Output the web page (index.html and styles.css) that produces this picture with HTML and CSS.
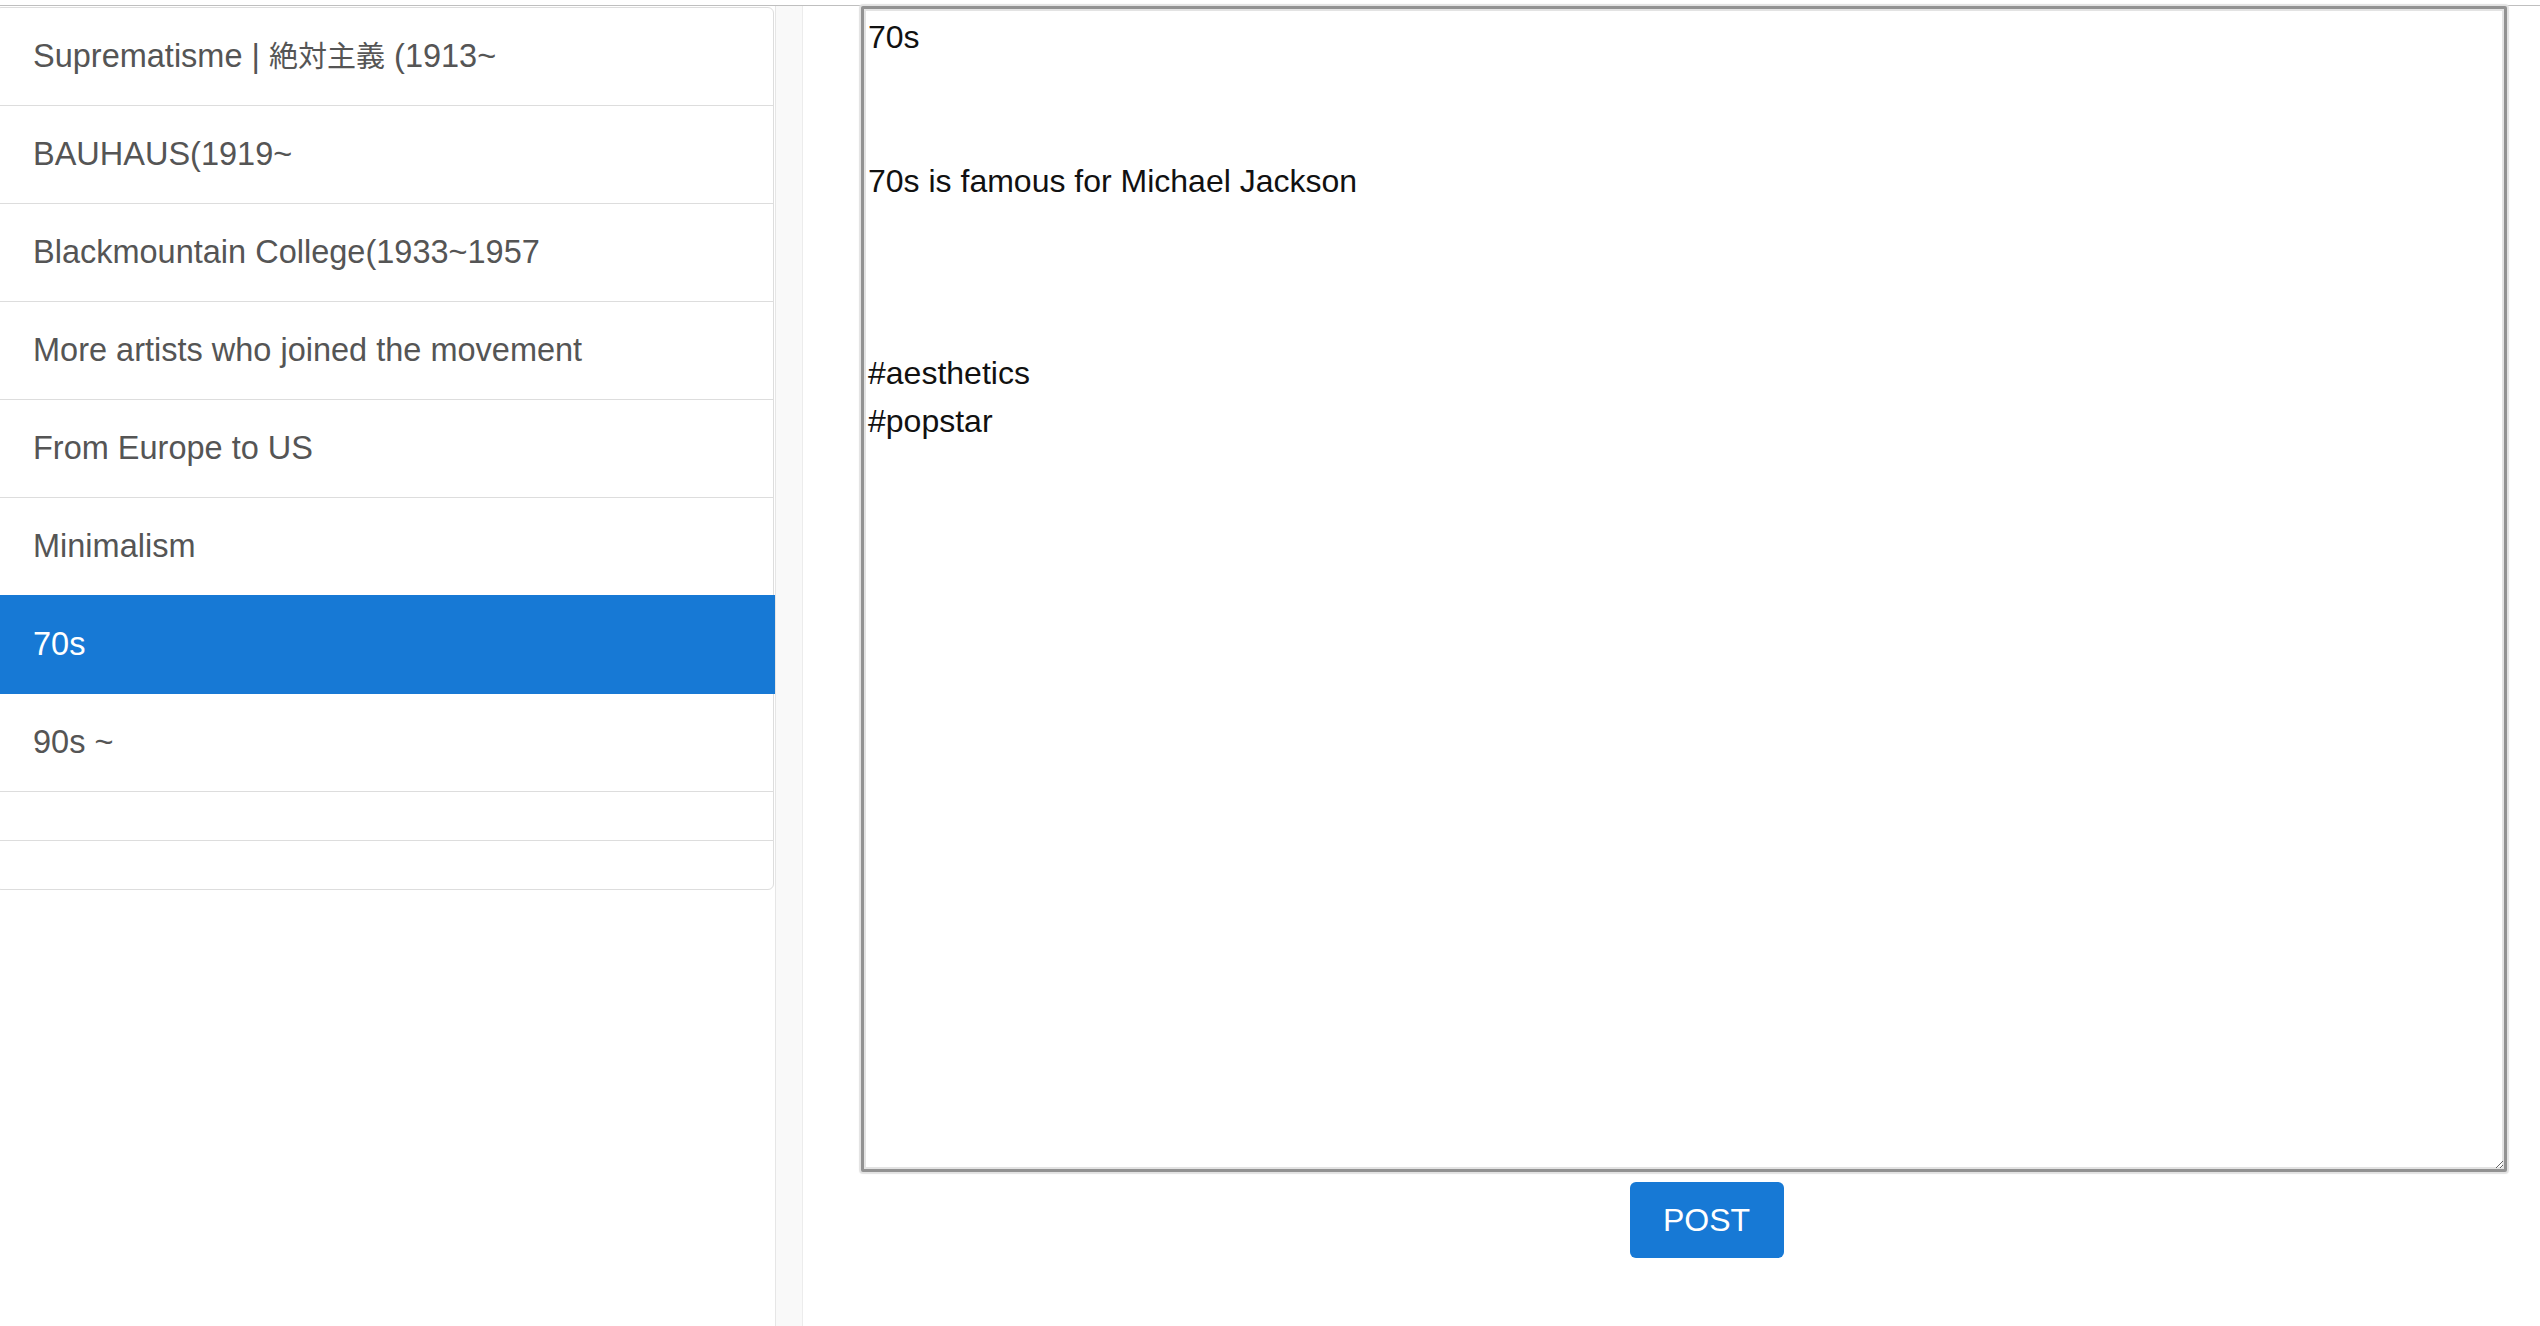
FILE: index.html
```html
<!DOCTYPE html>
<html lang="en">
<head>
    <meta charset="UTF-8">
    <meta name="viewport" content="width=device-width, initial-scale=1.0">
    <title>Movements</title>
    <link rel="stylesheet" href="styles.css">
</head>
<body>
    <div class="topbar"></div>

    <div class="layout">
        <!-- Sidebar list of movements -->
        <aside class="sidebar">
            <div class="list-group">
                <a class="list-item">Suprematisme | <span class="cjk">絶対主義</span> (1913~</a>
                <a class="list-item">BAUHAUS(1919~</a>
                <a class="list-item">Blackmountain College(1933~1957</a>
                <a class="list-item">More artists who joined the movement</a>
                <a class="list-item">From Europe to US</a>
                <a class="list-item">Minimalism</a>
                <a class="list-item active">70s</a>
                <a class="list-item">90s ~</a>
                <a class="list-item"></a>
                <a class="list-item"></a>
            </div>
            <div class="scroll-track"></div>
        </aside>

        <!-- Editor -->
        <main class="editor">
            <textarea class="post-body">70s


70s is famous for Michael Jackson



#aesthetics
#popstar</textarea>
            <div class="post-actions">
                <button class="post-btn">POST</button>
            </div>
        </main>
    </div>
</body>
</html>
```

FILE: styles.css
```css
body {
    margin: 0;
    font-family: "Liberation Sans", "Noto Sans CJK JP", sans-serif;
    background-color: #ffffff;
    overflow: hidden;
}

.topbar {
    height: 5px;
    border-bottom: 1px solid #bfbfbf;
}

.layout {
    display: flex;
    height: calc(100vh - 6px);
}

/* sidebar */
.sidebar {
    display: flex;
    width: 803px;
    flex-shrink: 0;
}

.list-group {
    width: 779px;
    margin-left: -5px;
    margin-right: 1px;
    margin-top: 1px;
    align-self: flex-start;
}

.list-item {
    position: relative;
    display: block;
    height: 49px;
    padding: 24px 37px;
    margin-bottom: -1px;
    border: 1px solid #dddddd;
    background-color: #ffffff;
    color: #555555;
    font-size: 32.5px;
    line-height: 49px;
    text-decoration: none;
    overflow: hidden;
}

.list-item:empty {
    height: 0;
}

.list-item .cjk {
    font-family: "Noto Sans CJK JP", sans-serif;
    font-size: 29px;
    line-height: 1;
}

.list-item:first-child {
    border-top-left-radius: 6px;
    border-top-right-radius: 6px;
}

.list-item:last-child {
    margin-bottom: 0;
    border-bottom-left-radius: 6px;
    border-bottom-right-radius: 6px;
}

.list-item.active {
    z-index: 2;
    color: #ffffff;
    background-color: #1779d5;
    border-color: #1779d5;
    margin-right: -1px;
}

.scroll-track {
    width: 28px;
    box-sizing: border-box;
    background-color: #f9f9f9;
    border-left: 1px solid #e6e6e6;
    border-right: 1px solid #ececec;
}

/* editor */
.editor {
    padding-left: 58px;
}

.post-body {
    display: block;
    box-sizing: border-box;
    width: 1646px;
    height: 1166px;
    margin: 0;
    padding: 4px;
    border: 3px solid #929292;
    border-radius: 2px;
    box-shadow: inset 0 0 0 2px #e3e3e3, 0 0 1px 2px #e2e2e2;
    font-family: "Liberation Sans", sans-serif;
    font-size: 32px;
    line-height: 48px;
    color: #111111;
    background-color: #ffffff;
    outline: none;
}

.post-actions {
    display: flex;
    justify-content: center;
    width: 1646px;
    box-sizing: border-box;
    padding-left: 45px;
    margin-top: 10px;
}

.post-btn {
    width: 154px;
    height: 76px;
    padding: 0;
    border: none;
    border-radius: 6px;
    background-color: #1779d5;
    color: #ffffff;
    font-family: "Liberation Sans", sans-serif;
    font-size: 32px;
    line-height: 76px;
}
```
